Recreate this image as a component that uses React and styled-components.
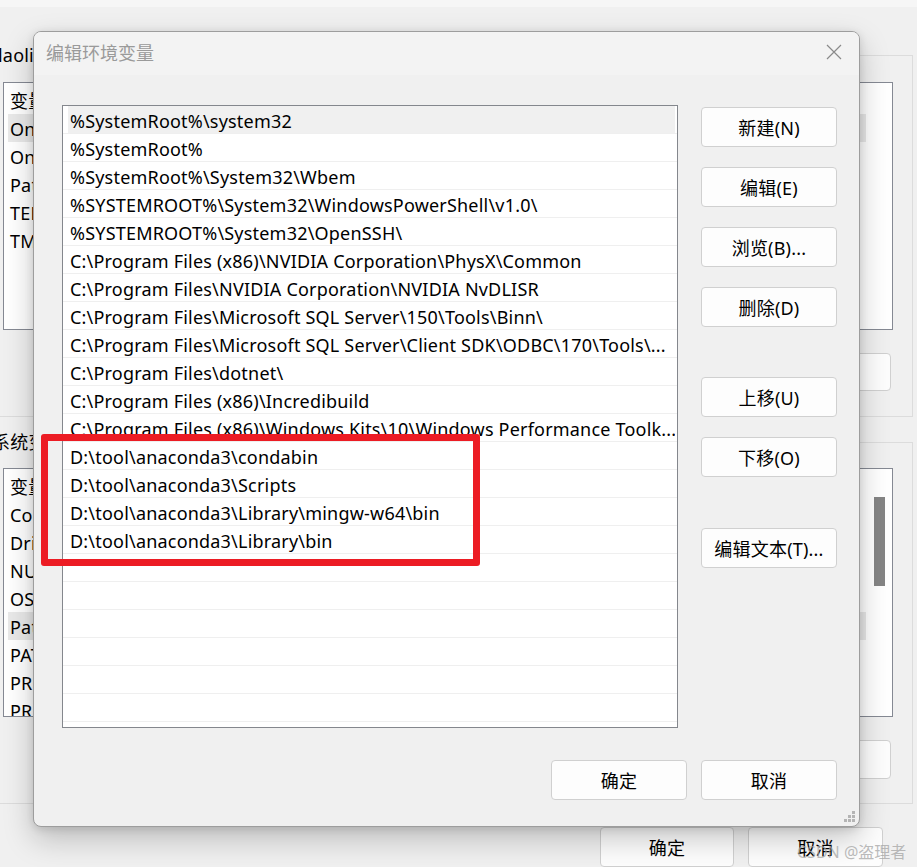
import React from "react";
import styled, { createGlobalStyle, css } from "styled-components";

const FONT = `"Noto Sans", "Noto Sans CJK SC", sans-serif`;

const GlobalStyle = createGlobalStyle`
  html, body {
    margin: 0;
    padding: 0;
    width: 917px;
    height: 867px;
    overflow: hidden;
    background: #efefef;
  }
  * {
    box-sizing: border-box;
  }
`;

// whole screen, parent window underneath the modal
const Screen = styled.div`
  position: relative;
  width: 917px;
  height: 867px;
  overflow: hidden;
  font-family: ${FONT};
  font-size: 18px;
  letter-spacing: 0.2px;
  color: #000;
  background: #f0f0f0;
`;

const TopStrip = styled.div`
  height: 7px;
  background: #f6f6f6;
`;

// group boxes of the parent "环境变量" window
const Group = styled.fieldset`
  margin: ${({ $top }) => $top}px 0 0 -14px;
  width: 927px;
  padding: ${({ $padTop }) => $padTop}px 19px ${({ $padBottom }) => $padBottom}px 16px;
  border: 1px solid #dcdcdc;
`;

const Caption = styled.legend`
  margin-left: ${({ $shift }) => $shift}px;
  padding: 0 4px 0 0;
  height: 22px;
  line-height: 22px;
  white-space: nowrap;
`;

const VarList = styled.div`
  display: grid;
  grid-template-columns: 1fr 26px;
  height: ${({ $h }) => $h}px;
  background: #fff;
  border: 1px solid #858993;
  overflow: hidden;
`;

const VarRows = styled.div`
  padding-top: 3px;
  padding-left: 4px;
`;

const VarRow = styled.div`
  display: grid;
  grid-template-columns: 190px 1fr;
  height: 28px;
  line-height: 30px;
  padding-left: 2px;
  white-space: nowrap;
  overflow: hidden;
  ${({ $selected }) =>
    $selected &&
    css`
      background: #e9e9e9;
    `}
`;

const ScrollTrack = styled.div`
  display: flex;
  justify-content: center;
  padding-top: 28px;
`;

const Thumb = styled.div`
  width: 11px;
  height: 89px;
  background: #858585;
`;

const ActionRow = styled.div`
  display: flex;
  justify-content: flex-end;
  gap: 14px;
  margin-top: 23px;
  padding-right: ${({ $right }) => $right || 2}px;
`;

const Button = styled.button`
  width: ${({ $w }) => $w || 136}px;
  height: ${({ $h }) => $h || 40}px;
  padding: 0;
  font-family: ${FONT};
  font-size: 18px;
  letter-spacing: 0.2px;
  color: #000;
  background: #fdfdfd;
  border: 1px solid #d0d0d0;
  border-radius: 4px;
  white-space: nowrap;
`;

// modal dialog lying over the parent window
const Dialog = styled.div`
  position: absolute;
  left: 33px;
  top: 31px;
  width: 827px;
  height: 796px;
  display: flex;
  flex-direction: column;
  background: #f0f0f0;
  border: 1px solid #9d9d9d;
  border-radius: 8px;
  box-shadow: 0 12px 30px rgba(0, 0, 0, 0.22), 0 2px 8px rgba(0, 0, 0, 0.12);
  overflow: hidden;
`;

const TitleBar = styled.div`
  display: flex;
  align-items: center;
  justify-content: space-between;
  height: 43px;
  padding: 0 17px 4px 12px;
  background: #f3f3f3;
`;

const Title = styled.div`
  font-size: 18px;
  letter-spacing: 0;
  color: #9a9a9a;
`;

const Body = styled.div`
  display: grid;
  grid-template-columns: 616px 136px;
  column-gap: 23px;
  padding: 30px 22px 0 28px;
`;

const PathList = styled.div`
  height: 623px;
  background: #fff;
  border: 1px solid #84878d;
  overflow: hidden;
`;

const PathRow = styled.div`
  height: 28px;
  border-bottom: 1px solid #efefef;
  padding-left: 5px;
  padding-right: 2px;
`;

const PathText = styled.div`
  height: 27px;
  line-height: 30px;
  padding-left: 2px;
  white-space: nowrap;
  overflow: hidden;
  background: ${({ $selected }) => ($selected ? "#f0f0f0" : "transparent")};
`;

const SideButtons = styled.div`
  display: flex;
  flex-direction: column;
  padding-top: 2px;
`;

const SideButton = styled(Button)`
  margin-top: ${({ $gap }) => $gap}px;
`;

const DialogFooter = styled.div`
  display: flex;
  justify-content: flex-end;
  gap: 14px;
  padding: 32px 22px 0 0;
`;

const Grip = styled.svg`
  position: absolute;
  right: 3px;
  bottom: 3px;
`;

// red annotation drawn over the screenshot
const Highlight = styled.div`
  position: absolute;
  left: 41px;
  top: 434px;
  width: 439px;
  height: 132px;
  border: 7px solid #ec1c24;
  border-radius: 3px;
`;

const Watermark = styled.div`
  position: absolute;
  left: 797px;
  top: 839px;
  font-size: 16px;
  letter-spacing: 0;
  color: rgba(165, 165, 165, 0.75);
  white-space: nowrap;
`;

const userVars = [
  ["OneDrive", "C:\\Users\\laoli\\OneDrive", true],
  ["OneDriveConsumer", "C:\\Users\\laoli\\OneDrive"],
  ["Path", "C:\\Users\\laoli\\AppData\\Local\\Microsoft\\WindowsApps;"],
  ["TEMP", "C:\\Users\\laoli\\AppData\\Local\\Temp"],
  ["TMP", "C:\\Users\\laoli\\AppData\\Local\\Temp"],
];

const systemVars = [
  ["ComSpec", "C:\\Windows\\system32\\cmd.exe"],
  ["DriverData", "C:\\Windows\\System32\\Drivers\\DriverData"],
  ["NUMBER_OF_PROCESSORS", "16"],
  ["OS", "Windows_NT"],
  ["Path", "C:\\Windows\\system32;C:\\Windows;", true],
  ["PATHEXT", ".COM;.EXE;.BAT;.CMD;.VBS;.VBE;.JS"],
  ["PROCESSOR_ARCHITECTURE", "AMD64"],
  ["PROCESSOR_IDENTIFIER", "Intel64 Family 6"],
];

const paths = [
  "%SystemRoot%\\system32",
  "%SystemRoot%",
  "%SystemRoot%\\System32\\Wbem",
  "%SYSTEMROOT%\\System32\\WindowsPowerShell\\v1.0\\",
  "%SYSTEMROOT%\\System32\\OpenSSH\\",
  "C:\\Program Files (x86)\\NVIDIA Corporation\\PhysX\\Common",
  "C:\\Program Files\\NVIDIA Corporation\\NVIDIA NvDLISR",
  "C:\\Program Files\\Microsoft SQL Server\\150\\Tools\\Binn\\",
  "C:\\Program Files\\Microsoft SQL Server\\Client SDK\\ODBC\\170\\Tools\\...",
  "C:\\Program Files\\dotnet\\",
  "C:\\Program Files (x86)\\Incredibuild",
  "C:\\Program Files (x86)\\Windows Kits\\10\\Windows Performance Toolk...",
  "D:\\tool\\anaconda3\\condabin",
  "D:\\tool\\anaconda3\\Scripts",
  "D:\\tool\\anaconda3\\Library\\mingw-w64\\bin",
  "D:\\tool\\anaconda3\\Library\\bin",
  "", "", "", "", "", "",
];

const sideActions = [
  ["新建(N)", 0],
  ["编辑(E)", 20],
  ["浏览(B)...", 20],
  ["删除(D)", 20],
  ["上移(U)", 50],
  ["下移(O)", 20],
  ["编辑文本(T)...", 51],
];

const VariableList = ({ rows, height, thumb }) => (
  <VarList $h={height}>
    <VarRows>
      <VarRow>
        <span>变量</span>
        <span>值</span>
      </VarRow>
      {rows.map(([name, value, selected]) => (
        <VarRow key={name} $selected={selected}>
          <span>{name}</span>
          <span>{value}</span>
        </VarRow>
      ))}
    </VarRows>
    <ScrollTrack>{thumb && <Thumb />}</ScrollTrack>
  </VarList>
);

const CloseIcon = () => (
  <svg width="16" height="16" viewBox="0 0 16 16">
    <path d="M1 1 L15 15 M15 1 L1 15" stroke="#8a8a8a" strokeWidth="1.2" fill="none" />
  </svg>
);

const GripIcon = () => (
  <Grip width="12" height="12" viewBox="0 0 12 12">
    {[
      [8, 0],
      [4, 4],
      [8, 4],
      [0, 8],
      [4, 8],
      [8, 8],
    ].map(([x, y]) => (
      <rect key={`${x}-${y}`} x={x} y={y} width="3" height="3" fill="#b4b4b4" />
    ))}
  </Grip>
);

export default function App() {
  return (
    <Screen>
      <GlobalStyle />
      <TopStrip />

      <Group $top={37} $padTop={16} $padBottom={25}>
        <Caption $shift={-5}>laoli 的用户变量(U)</Caption>
        <VariableList rows={userVars} height={248} />
        <ActionRow>
          <Button $w={150} $h={38}>新建(N)...</Button>
          <Button $w={150} $h={38}>编辑(E)...</Button>
          <Button $w={150} $h={38}>删除(D)</Button>
        </ActionRow>
      </Group>

      <Group $top={14} $padTop={15} $padBottom={24}>
        <Caption $shift={-11}>系统变量(S)</Caption>
        <VariableList rows={systemVars} height={249} thumb />
        <ActionRow>
          <Button $w={150} $h={39}>新建(W)...</Button>
          <Button $w={150} $h={39}>编辑(I)...</Button>
          <Button $w={150} $h={39}>删除(L)</Button>
        </ActionRow>
      </Group>

      <ActionRow $right={34}>
        <Button $w={134} $h={40}>确定</Button>
        <Button $w={135} $h={40}>取消</Button>
      </ActionRow>

      <Dialog>
        <TitleBar>
          <Title>编辑环境变量</Title>
          <CloseIcon />
        </TitleBar>
        <Body>
          <PathList>
            {paths.map((p, i) => (
              <PathRow key={i}>
                <PathText $selected={i === 0}>{p}</PathText>
              </PathRow>
            ))}
          </PathList>
          <SideButtons>
            {sideActions.map(([label, gap]) => (
              <SideButton key={label} $gap={gap}>
                {label}
              </SideButton>
            ))}
          </SideButtons>
        </Body>
        <DialogFooter>
          <Button $w={136}>确定</Button>
          <Button $w={136}>取消</Button>
        </DialogFooter>
        <GripIcon />
      </Dialog>

      <Highlight />
      <Watermark>CSDN @盗理者</Watermark>
    </Screen>
  );
}
